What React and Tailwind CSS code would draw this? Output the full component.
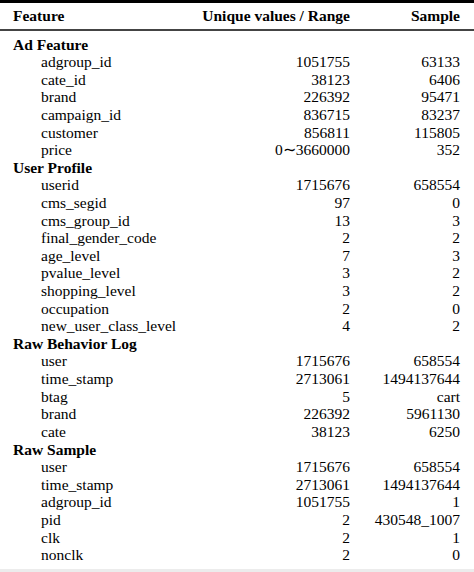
const sections = [
  {
    title: "Ad Feature",
    rows: [
      ["adgroup_id", "1051755", "63133"],
      ["cate_id", "38123", "6406"],
      ["brand", "226392", "95471"],
      ["campaign_id", "836715", "83237"],
      ["customer", "856811", "115805"],
      ["price", "0∼3660000", "352"],
    ],
  },
  {
    title: "User Profile",
    rows: [
      ["userid", "1715676", "658554"],
      ["cms_segid", "97", "0"],
      ["cms_group_id", "13", "3"],
      ["final_gender_code", "2", "2"],
      ["age_level", "7", "3"],
      ["pvalue_level", "3", "2"],
      ["shopping_level", "3", "2"],
      ["occupation", "2", "0"],
      ["new_user_class_level", "4", "2"],
    ],
  },
  {
    title: "Raw Behavior Log",
    rows: [
      ["user", "1715676", "658554"],
      ["time_stamp", "2713061", "1494137644"],
      ["btag", "5", "cart"],
      ["brand", "226392", "5961130"],
      ["cate", "38123", "6250"],
    ],
  },
  {
    title: "Raw Sample",
    rows: [
      ["user", "1715676", "658554"],
      ["time_stamp", "2713061", "1494137644"],
      ["adgroup_id", "1051755", "1"],
      ["pid", "2", "430548_1007"],
      ["clk", "2", "1"],
      ["nonclk", "2", "0"],
    ],
  },
];

function Row({ name, unique, sample }) {
  return (
    <div className="grid grid-cols-[350px_110px] h-[17.62px]">
      <div className="flex justify-between">
        <span className="pl-[41px]">{name}</span>
        <span>{unique}</span>
      </div>
      <span className="text-right">{sample}</span>
    </div>
  );
}

export default function App() {
  return (
    <div className="w-[474px] h-[572px] bg-white text-black font-['Liberation_Serif',serif] text-[15.5px] leading-[17.62px] flex flex-col">
      <div className="h-[3px] bg-black" />
      <div className="grid grid-cols-[350px_110px] font-bold pt-[3.8px] pb-[4.5px]">
        <div className="flex justify-between">
          <span className="pl-[13px]">Feature</span>
          <span>Unique values / Range</span>
        </div>
        <span className="text-right">Sample</span>
      </div>
      <div className="h-[2px] bg-[#444]" />
      <div className="pt-[4.6px] flex-1">
        {sections.map((s) => (
          <div key={s.title}>
            <div className="h-[17.62px] pl-[13px] font-bold">{s.title}</div>
            {s.rows.map((r, i) => (
              <Row key={i} name={r[0]} unique={r[1]} sample={r[2]} />
            ))}
          </div>
        ))}
      </div>
      <div className="h-[3px] bg-[#ececec]" />
    </div>
  );
}
